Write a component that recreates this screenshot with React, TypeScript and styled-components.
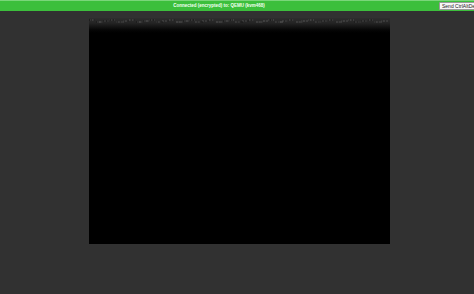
import React from "react";
import styled, { createGlobalStyle } from "styled-components";

const Global = createGlobalStyle`
  html, body { margin: 0; padding: 0; background: #313131; height: 100%; }
  #root { min-height: 294px; }
`;

const Page = styled.div`
  width: 474px;
  height: 294px;
  background: #313131;
  display: flex;
  flex-direction: column;
  overflow: hidden;
  font-family: "Liberation Sans", Arial, sans-serif;
`;

const StatusBar = styled.div`
  height: 10px;
  border-top: 1px solid #7ad67a;
  background: #3cbf3c;
  display: grid;
  grid-template-columns: 1fr auto;
  align-items: center;
`;

const StatusText = styled.div`
  color: #f4fff4;
  font-size: 4.5px;
  font-weight: bold;
  text-align: center;
  white-space: nowrap;
  line-height: 10px;
`;

const SendButton = styled.button`
  height: 8px;
  margin: 0 0 1px 0;
  padding: 0 2px;
  background: #f6f6f6;
  border: 1px solid #999;
  border-radius: 1px;
  font-family: "Liberation Sans", Arial, sans-serif;
  font-size: 5px;
  line-height: 6px;
  color: #222;
  white-space: nowrap;
  width: 36px;
  text-align: left;
  overflow: hidden;
  transform: translateX(1px);
`;

const Stage = styled.div`
  display: flex;
  justify-content: center;
  padding-top: 7px;
  padding-left: 5px;
`;

const Screen = styled.div`
  width: 301px;
  height: 226px;
  background: linear-gradient(#2e2e2e 0px, #242424 5px, #121212 9px, #050505 12px, #000 15px, #000 100%);
  display: flex;
  flex-direction: column;
`;

const NoiseStrip = styled.svg`
  display: block;
  width: 301px;
  height: 6px;
`;

const noise = Array.from({ length: 260 }, (_, i) => {
  const x = (i * 53) % 298;
  const y = 1.5 + ((i * 7) % 3);
  const w = 1 + ((i * 13) % 3);
  const shade = 20 + ((i * 29) % 70);
  return { x, y, w, shade };
});

export default function App() {
  return (
    <Page>
      <Global />
      <StatusBar>
        <StatusText>Connected (encrypted) to: QEMU (kvm468)</StatusText>
        <SendButton>Send CtrlAltDel</SendButton>
      </StatusBar>
      <Stage>
        <Screen>
          <NoiseStrip viewBox="0 0 301 6">
            {noise.map((n, i) => (
              <rect
                key={i}
                x={n.x}
                y={n.y}
                width={n.w}
                height={1}
                fill={`rgb(${n.shade},${n.shade},${n.shade})`}
              />
            ))}
          </NoiseStrip>
        </Screen>
      </Stage>
    </Page>
  );
}
